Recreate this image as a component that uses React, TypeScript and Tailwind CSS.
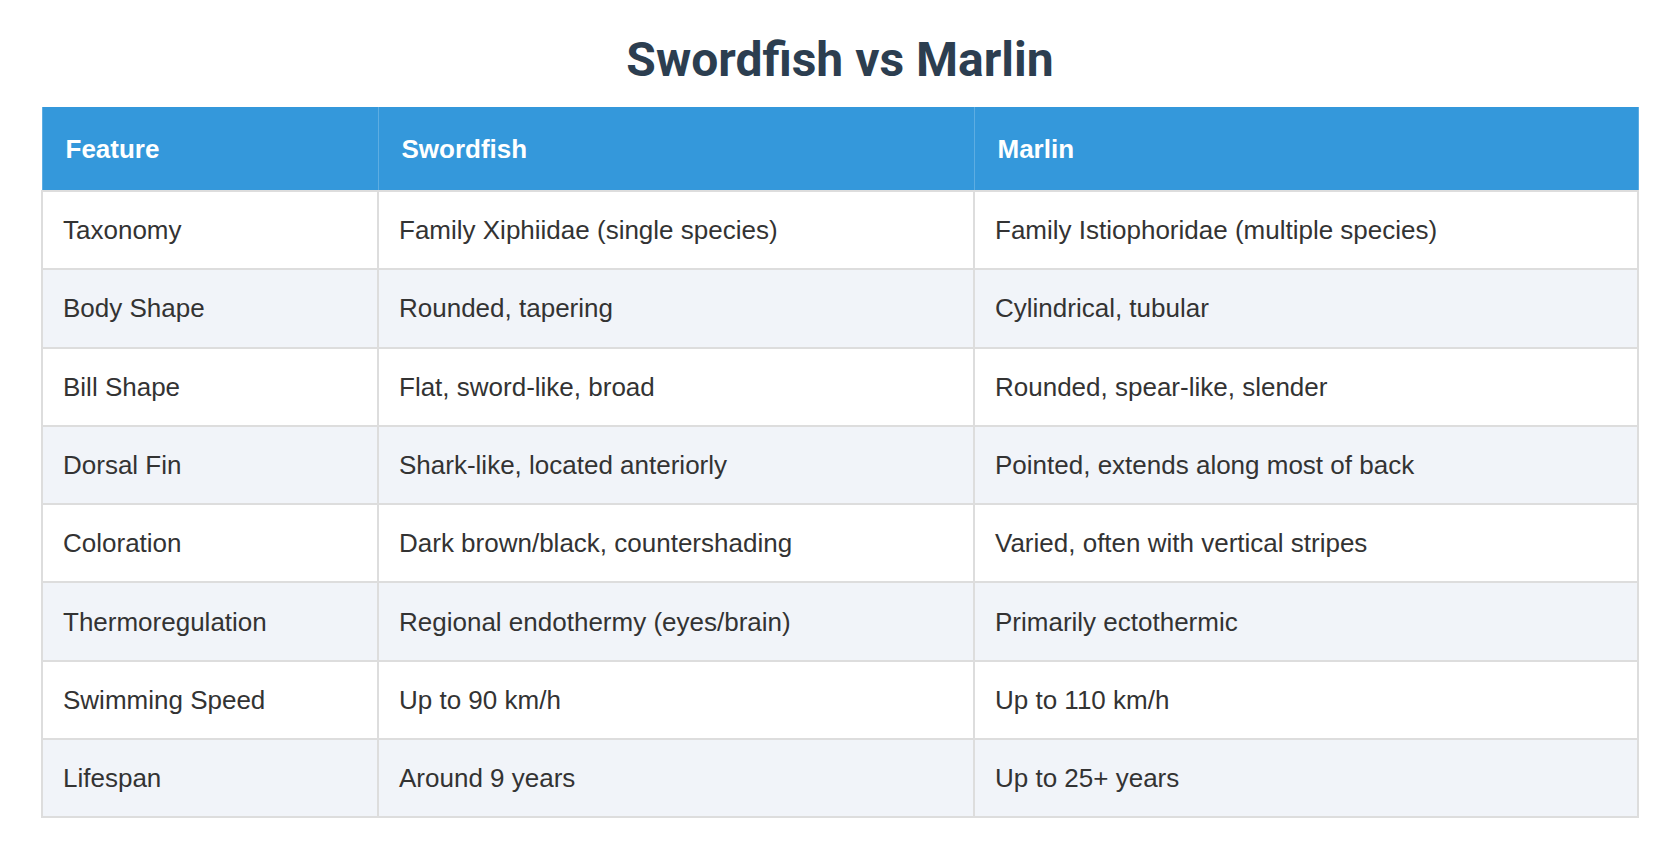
const ROWS = [
  ['Taxonomy', 'Family Xiphiidae (single species)', 'Family Istiophoridae (multiple species)'],
  ['Body Shape', 'Rounded, tapering', 'Cylindrical, tubular'],
  ['Bill Shape', 'Flat, sword-like, broad', 'Rounded, spear-like, slender'],
  ['Dorsal Fin', 'Shark-like, located anteriorly', 'Pointed, extends along most of back'],
  ['Coloration', 'Dark brown/black, countershading', 'Varied, often with vertical stripes'],
  ['Thermoregulation', 'Regional endothermy (eyes/brain)', 'Primarily ectothermic'],
  ['Swimming Speed', 'Up to 90 km/h', 'Up to 110 km/h'],
  ['Lifespan', 'Around 9 years', 'Up to 25+ years'],
];

export default function App() {
  return (
    <div className="min-h-screen bg-white px-[41px] pt-[32px] font-['Liberation_Sans',Arial,sans-serif]">
      <h1 className="mb-[19px] text-center font-['Roboto',sans-serif] text-[48px] font-bold leading-[56px] text-[#2c3e50]">
        Swordfish vs Marlin
      </h1>
      <table className="w-full border-collapse text-[26px] leading-[30px] text-[#333]">
        <colgroup>
          <col className="w-[336px]" />
          <col className="w-[596px]" />
          <col />
        </colgroup>
        <thead>
          <tr className="h-[84px] bg-[#3498db] text-left text-white">
            <th className="border-x border-[#5dade2] px-[23px] font-bold">Feature</th>
            <th className="border-x border-[#5dade2] px-[23px] font-bold">Swordfish</th>
            <th className="border-x border-[#5dade2] px-[23px] font-bold">Marlin</th>
          </tr>
        </thead>
        <tbody>
          {ROWS.map((row, i) => (
            <tr key={row[0]} className={`h-[78.3px] ${i % 2 === 1 ? 'bg-[#f1f4f9]' : 'bg-white'}`}>
              {row.map((cell, j) => (
                <td key={j} className="border-2 border-[#dddddd] px-[20px]">
                  {cell}
                </td>
              ))}
            </tr>
          ))}
        </tbody>
      </table>
    </div>
  );
}
